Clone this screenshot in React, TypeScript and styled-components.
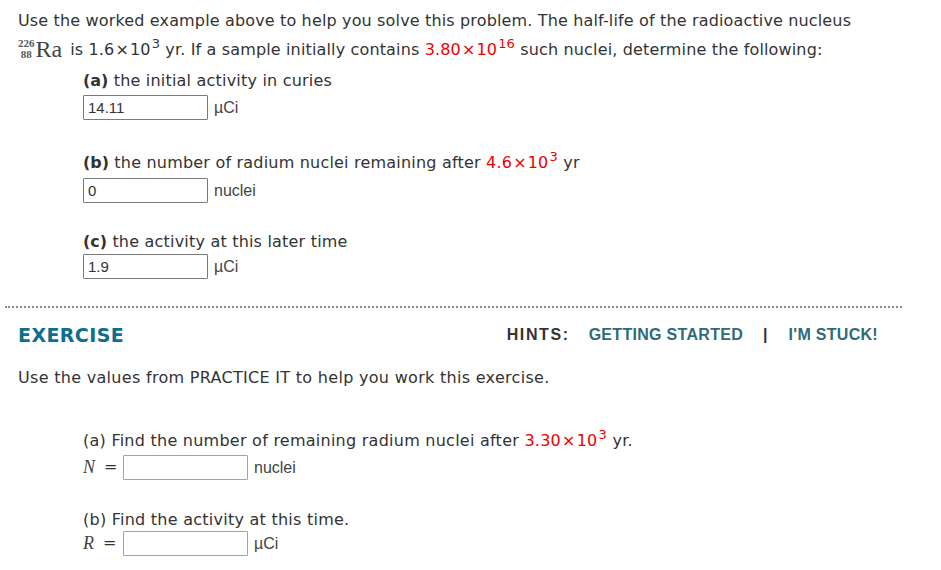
import React from 'react';
import styled, { createGlobalStyle } from 'styled-components';

const GlobalStyle = createGlobalStyle`
  html, body {
    margin: 0;
    padding: 0;
    background: #ffffff;
  }
  body {
    font-family: "DejaVu Sans", Verdana, sans-serif;
    color: #333333;
  }
`;

const Page = styled.div`
  width: 941px;
  height: 570px;
  padding: 0 39px 0 5px;
  box-sizing: border-box;
  overflow: hidden;
`;

const Intro = styled.p`
  margin: 6px 0 0;
  padding-left: 13px;
  font-size: 16px;
  letter-spacing: 0.15px;
  line-height: 29px;
`;

const Red = styled.span`
  color: #ee0000;
  white-space: nowrap;
`;

const Sup = styled.sup`
  font-size: 13px;
  vertical-align: 7px;
  line-height: 0;
  margin-left: 1px;
`;

const TimesSign = styled.span`
  margin: 0 1px;
`;

const Nuclide = styled.span`
  display: inline-flex;
  align-items: flex-end;
  gap: 1px;
  vertical-align: middle;
  font-family: "Liberation Serif", "Times New Roman", serif;
  color: #444;
  margin: -5px 8px 0 0;
  letter-spacing: 0;
`;

const NumStack = styled.span`
  display: inline-flex;
  flex-direction: column;
  align-items: center;
  gap: 1px;
  font-size: 11px;
  line-height: 10px;
  font-weight: bold;
  color: #555;
`;

const Symbol = styled.span`
  font-size: 24px;
  line-height: 19px;
`;

const Parts = styled.div`
  padding-left: 78px;
  display: flex;
  flex-direction: column;
`;

const Part = styled.div<{ $gap?: number }>`
  margin-top: ${(p) => p.$gap ?? 0}px;
`;

const Question = styled.div`
  font-size: 16px;
  letter-spacing: 0.2px;
  line-height: 22px;
`;

const Tag = styled.b`
  font-weight: bold;
  letter-spacing: 0;
`;

const AnswerRow = styled.div<{ $top?: number }>`
  display: flex;
  align-items: center;
  gap: 6px;
  margin-top: ${(p) => p.$top ?? 1}px;
`;

const Input = styled.div<{ $empty?: boolean }>`
  width: 125px;
  height: 25px;
  box-sizing: border-box;
  border: 1px solid ${(p) => (p.$empty ? '#a3a3a3' : '#7a7a7a')};
  border-radius: 1px;
  padding: 0 4px;
  font-family: "Liberation Sans", Arial, sans-serif;
  font-size: 15px;
  line-height: 23px;
  color: #333;
`;

const Unit = styled.span`
  font-family: "Liberation Sans", Arial, sans-serif;
  font-size: 16px;
  color: #444;
`;

const Divider = styled.div`
  margin-top: 27px;
  border-top: 2px dotted #888888;
`;

const ExerciseHeader = styled.div`
  display: flex;
  align-items: center;
  justify-content: space-between;
  padding: 0 24px 0 13px;
  margin-top: 14px;
  height: 26px;
`;

const ExerciseTitle = styled.h2`
  margin: 0;
  font-family: "DejaVu Sans", Tahoma, sans-serif;
  font-weight: bold;
  font-size: 19px;
  color: #0e6f8c;
  letter-spacing: 0.4px;
`;

const Hints = styled.div`
  display: flex;
  align-items: center;
  font-family: "Liberation Sans", Arial, sans-serif;
  font-weight: bold;
  font-size: 16px;
`;

const HintLabel = styled.span`
  color: #333;
  letter-spacing: 1.6px;
  margin-right: 19px;
`;

const HintLink = styled.a`
  color: #2e6b79;
  text-decoration: none;
  letter-spacing: 0.3px;
`;

const Pipe = styled.span`
  color: #333;
  margin: 0 21px 0 20px;
`;

const ExerciseText = styled.p`
  margin: 19px 0 0;
  padding-left: 13px;
  font-size: 16px;
  letter-spacing: 0.3px;
  line-height: 22px;
`;

const ExerciseQuestion = styled.div`
  font-size: 16px;
  letter-spacing: 0.25px;
  line-height: 22px;
`;

const VarLabel = styled.span`
  width: 34px;
  font-size: 16px;
  display: inline-flex;
  gap: 9px;
`;

const Var = styled.i`
  font-family: "Liberation Serif", "Times New Roman", serif;
  font-size: 18px;
  color: #444;
`;

const Times = () => <TimesSign>&times;</TimesSign>;

export default function App() {
  return (
    <>
      <GlobalStyle />
      <Page>
        <Intro>
          Use the worked example above to help you solve this problem. The half-life of the radioactive nucleus
          <br />
          <Nuclide>
            <NumStack>
              <span>226</span>
              <span>88</span>
            </NumStack>
            <Symbol>Ra</Symbol>
          </Nuclide>
          is 1.6<Times />10<Sup>3</Sup> yr. If a sample initially contains{' '}
          <Red>
            3.80<Times />10<Sup>16</Sup>
          </Red>{' '}
          such nuclei, determine the following:
        </Intro>

        <Parts>
          <Part $gap={6}>
            <Question>
              <Tag>(a)</Tag> the initial activity in curies
            </Question>
            <AnswerRow $top={3}>
              <Input>14.11</Input>
              <Unit>&micro;Ci</Unit>
            </AnswerRow>
          </Part>
          <Part $gap={32}>
            <Question>
              <Tag>(b)</Tag> the number of radium nuclei remaining after{' '}
              <Red>
                4.6<Times />10<Sup>3</Sup>
              </Red>{' '}
              yr
            </Question>
            <AnswerRow $top={4}>
              <Input>0</Input>
              <Unit>nuclei</Unit>
            </AnswerRow>
          </Part>
          <Part $gap={28}>
            <Question>
              <Tag>(c)</Tag> the activity at this later time
            </Question>
            <AnswerRow $top={1}>
              <Input>1.9</Input>
              <Unit>&micro;Ci</Unit>
            </AnswerRow>
          </Part>
        </Parts>

        <Divider />

        <ExerciseHeader>
          <ExerciseTitle>EXERCISE</ExerciseTitle>
          <Hints>
            <HintLabel>HINTS:</HintLabel>
            <HintLink href="#">GETTING STARTED</HintLink>
            <Pipe>|</Pipe>
            <HintLink href="#">I'M STUCK!</HintLink>
          </Hints>
        </ExerciseHeader>

        <ExerciseText>Use the values from PRACTICE IT to help you work this exercise.</ExerciseText>

        <Parts>
          <Part $gap={41}>
            <ExerciseQuestion>
              (a) Find the number of remaining radium nuclei after{' '}
              <Red>
                3.30<Times />10<Sup>3</Sup>
              </Red>{' '}
              yr.
            </ExerciseQuestion>
            <AnswerRow $top={3}>
              <VarLabel>
                <Var>N</Var>=
              </VarLabel>
              <Input $empty />
              <Unit>nuclei</Unit>
            </AnswerRow>
          </Part>
          <Part $gap={29}>
            <ExerciseQuestion>(b) Find the activity at this time.</ExerciseQuestion>
            <AnswerRow $top={0}>
              <VarLabel>
                <Var>R</Var>=
              </VarLabel>
              <Input $empty />
              <Unit>&micro;Ci</Unit>
            </AnswerRow>
          </Part>
        </Parts>
      </Page>
    </>
  );
}
